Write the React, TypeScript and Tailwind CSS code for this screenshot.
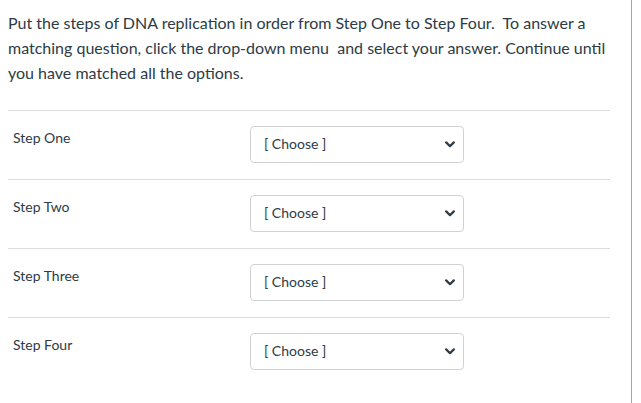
import React from "react";

const steps = ["Step One", "Step Two", "Step Three", "Step Four"];

function Chevron() {
  return (
    <svg width="10" height="7" viewBox="0 0 10 7" className="block">
      <path d="M1.2 1.4 L5 5.2 L8.8 1.4" fill="none" stroke="#2d3b45" strokeWidth="2.2" strokeLinecap="round" strokeLinejoin="round" />
    </svg>
  );
}

export default function App() {
  return (
    <div className="relative w-[641px] h-[403px] bg-white overflow-hidden text-[#2d3b45]" style={{ fontFamily: "Lato, 'Noto Sans', sans-serif" }}>
      <div className="absolute right-[9px] top-0 bottom-0 w-px bg-[#a5a5a5]" />
      <div className="pl-2 w-[610px]">
        <p className="pt-[10px] text-[16px] leading-[25px] whitespace-nowrap">
          Put the steps of DNA replication in order from Step One to Step Four.&nbsp; To answer a
          <br />
          matching question, click the drop-down menu&nbsp; and select your answer. Continue until
          <br />
          you have matched all the options.
        </p>
        <div className="mt-[25px]">
          {steps.map((s) => (
            <div key={s} className="border-t border-[#dcdcdc] h-[69px] flex">
              <div className="w-[242px] pl-[5px] pt-[18px] text-[14px] leading-[18px]">{s}</div>
              <div className="pt-[15px]">
                <div className="w-[214px] h-[37px] border border-[#cfd3d6] rounded-[4px] flex items-center justify-between pl-[13px] pr-[8px]">
                  <span className="text-[14px] leading-[18px] -mt-[1px]">[ Choose ]</span>
                  <Chevron />
                </div>
              </div>
            </div>
          ))}
        </div>
      </div>
    </div>
  );
}
